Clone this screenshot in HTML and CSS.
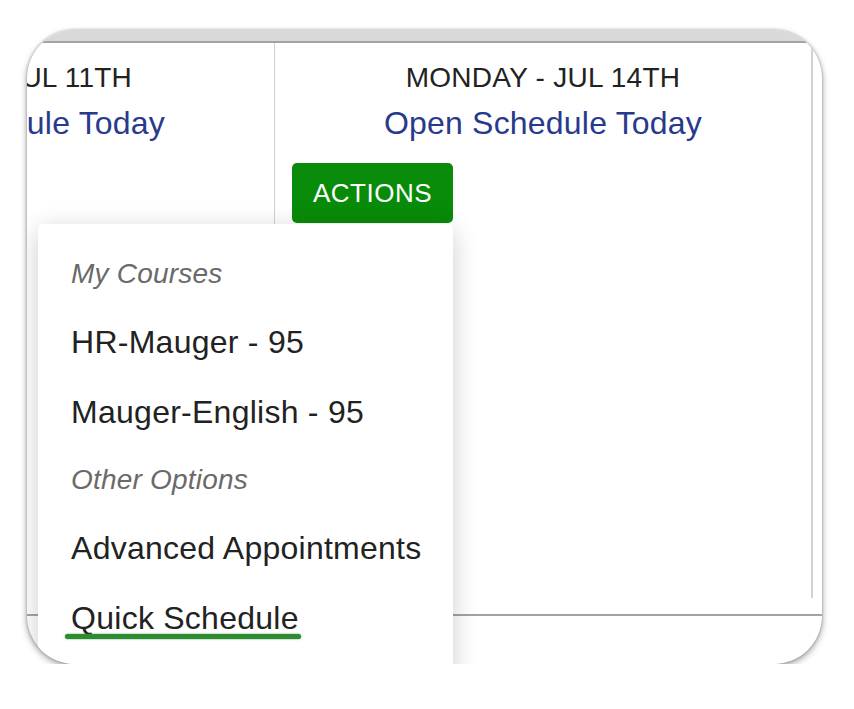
FILE: index.html
```html
<!DOCTYPE html>
<html lang="en">
<head>
<meta charset="utf-8">
<title>Schedule</title>
<link rel="stylesheet" href="styles.css">
</head>
<body>
<div class="card">
  <div class="topbar"></div>
  <div class="week">
    <div class="day">
      <div class="day-title">FRIDAY - JUL 11TH</div>
      <a class="day-link" href="#">Open Schedule Today</a>
    </div>
    <div class="day day-last">
      <div class="day-title">MONDAY - JUL 14TH</div>
      <a class="day-link" href="#">Open Schedule Today</a>
      <div class="actions-row">
        <div class="dropdown">
          <button class="btn-actions" type="button">ACTIONS</button>
          <div class="menu">
            <div class="menu-header">My Courses</div>
            <a class="menu-item" href="#">HR-Mauger - 95</a>
            <a class="menu-item" href="#">Mauger-English - 95</a>
            <div class="menu-header">Other Options</div>
            <a class="menu-item" href="#">Advanced Appointments</a>
            <a class="menu-item menu-item-active" href="#">Quick Schedule</a>
          </div>
        </div>
      </div>
    </div>
  </div>
  <div class="footer"></div>
</div>
</body>
</html>
```
FILE: styles.css
```css
html, body {
  margin: 0;
  padding: 0;
  background: #ffffff;
}
body {
  padding: 30px 0 0 27px;
  font-family: "Liberation Sans", Arial, sans-serif;
}
.card {
  position: relative;
  width: 795px;
  height: 634px;
  border-radius: 48px;
  overflow: hidden;
  background: #ffffff;
  box-shadow: 0 3px 7px rgba(0, 0, 0, 0.35), 0 0 3px rgba(0, 0, 0, 0.3);
}
.topbar {
  height: 11px;
  background: #d9d9d9;
  border-bottom: 2px solid #a3a3a3;
}
.week {
  display: flex;
  margin-left: -289px;
  height: 555px;
}
.day {
  flex: none;
  box-sizing: border-box;
  width: 537px;
  height: 100%;
  border-right: 1px solid #cfcfcf;
  text-align: center;
  padding: 18px 17px 0;
}
.day-last {
  width: 538px;
  border-right: 2px solid #d2d2d2;
}
.day-title {
  font-size: 28px;
  line-height: 34px;
  letter-spacing: 0.25px;
  color: #222222;
}
.day-link {
  display: block;
  margin-top: 8px;
  font-size: 32px;
  line-height: 40px;
  letter-spacing: 0.2px;
  color: #283a8c;
  text-decoration: none;
}
.actions-row {
  text-align: left;
  margin-top: 20px;
}
.dropdown {
  position: relative;
  display: inline-block;
  vertical-align: top;
}
.btn-actions {
  display: block;
  height: 60px;
  margin: 0;
  padding: 0 21px;
  border: none;
  border-radius: 5px;
  background: #088b08;
  color: #ffffff;
  font-family: "Liberation Sans", Arial, sans-serif;
  font-size: 26px;
  letter-spacing: 0.5px;
  line-height: 60px;
}
.menu {
  position: absolute;
  z-index: 10;
  top: 61px;
  right: 0;
  width: 415px;
  box-sizing: border-box;
  padding: 17px 0 30px 33px;
  background: #ffffff;
  border-radius: 5px;
  box-shadow: 0 6px 26px rgba(0, 0, 0, 0.2);
}
.menu-header {
  font-size: 28px;
  line-height: 66px;
  font-style: italic;
  letter-spacing: 0.2px;
  color: #6a6a6a;
}
.menu-item {
  display: block;
  font-size: 32px;
  line-height: 70px;
  letter-spacing: 0.25px;
  color: #222222;
  text-decoration: none;
}
.menu-item-active {
  position: relative;
  width: max-content;
}
.menu-item-active::after {
  content: "";
  position: absolute;
  left: -6px;
  right: -2px;
  top: 51px;
  height: 5px;
  border-radius: 3px;
  background: #2e8b31;
  box-shadow: 0 0 2px rgba(46, 139, 49, 0.8);
}
.footer {
  height: 16px;
  border-bottom: 2px solid #a3a3a3;
}
```
